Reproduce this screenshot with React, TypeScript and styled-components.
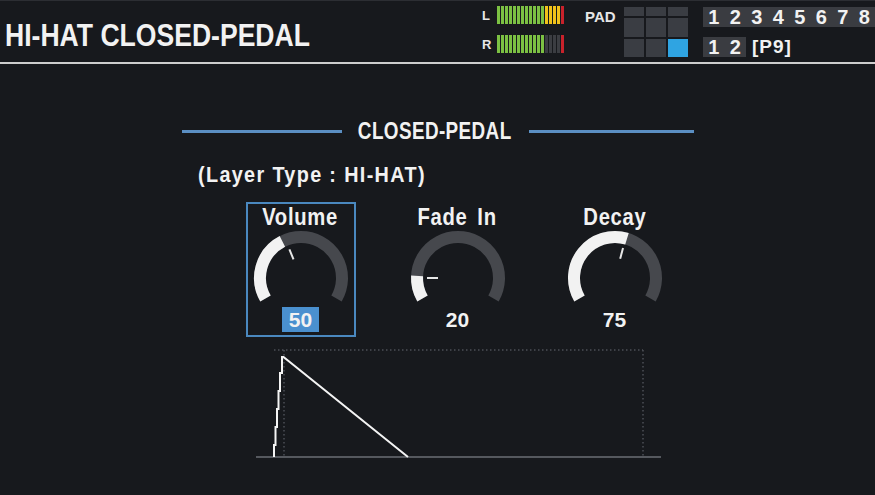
import styled, { createGlobalStyle } from "styled-components"

const GlobalStyle = createGlobalStyle`
  html, body {
    margin: 0;
    padding: 0;
    background: #17191d;
  }
`

const Screen = styled.div`
  width: 875px;
  height: 495px;
  overflow: hidden;
  background: #17191d;
  color: #f2f2f2;
  font-family: "Liberation Sans", Arial, sans-serif;
`

const Header = styled.header`
  box-sizing: border-box;
  height: 64px;
  display: flex;
  border-top: 1px solid #2c2e33;
  border-bottom: 2px solid #cdcdcd;
`
// the unit's display font is a condensed bold, so squeeze Liberation Sans
const Title = styled.h1`
  flex: 1;
  margin: 0;
  padding: 8px 0 0 5px;
  display: flex;
  align-items: center;
  font-size: 32px;
  font-weight: 700;
  white-space: nowrap;
  transform: scaleX(0.83);
  transform-origin: 5px center;
`
const Meters = styled.div`
  width: 86px;
  padding-top: 5px;
  display: flex;
  flex-direction: column;
  gap: 11px;
`
const MeterRow = styled.div`
  height: 18px;
  display: flex;
  align-items: center;
`
const MeterLabel = styled.span`
  width: 15px;
  font-size: 13px;
  font-weight: 700;
  color: #e6e6e6;
`
const Bars = styled.div`
  height: 18px;
  display: flex;
  gap: 1.5px;
`
const Bar = styled.span<{ $color: string }>`
  width: 2.5px;
  height: 100%;
  background: ${p => p.$color};
`
const PadLabel = styled.span`
  width: 39px;
  margin-left: 17px;
  padding-top: 7px;
  font-size: 15px;
  font-weight: 700;
  color: #e6e6e6;
`
const PadGrid = styled.div`
  margin-top: 6px;
  display: grid;
  grid-template-columns: repeat(3, 20px);
  grid-template-rows: 9px 19px 18px;
  gap: 2px;
  align-self: flex-start;
`
const PadCell = styled.span<{ $active?: boolean }>`
  background: ${p => (p.$active ? "#2fa4e2" : "#3a3d43")};
`
const Banks = styled.div`
  margin: 6px 0 0 15px;
  width: 172px;
  display: flex;
  flex-direction: column;
  gap: 9px;
`
const BankRow = styled.div`
  display: flex;
  align-items: center;
`
const BankBox = styled.div`
  display: flex;
  background: #3a3c41;
`
const BankNum = styled.span`
  width: 21.5px;
  height: 20px;
  line-height: 21px;
  text-align: center;
  font-size: 20px;
  font-weight: 700;
  color: #f2f2f2;
`
const PadName = styled.span`
  margin-left: 6px;
  font-size: 19px;
  font-weight: 700;
  letter-spacing: 1px;
`

const Main = styled.main`
  width: 512px;
  margin: 0 auto;
  padding-top: 54px;
  font-weight: 700;
`
const Heading = styled.div`
  height: 24px;
  display: grid;
  grid-template-columns: 160px minmax(0, 1fr) 165px;
  align-items: center;
`
const Rule = styled.span`
  height: 3px;
  background: #5b8fc3;
`
const HeadingText = styled.span`
  justify-self: center;
  font-size: 23px;
  letter-spacing: 0.5px;
  white-space: nowrap;
  transform: scaleX(0.82);
`
const LayerType = styled.div`
  margin: 21px 0 0 16px;
  font-size: 22px;
  letter-spacing: 1.5px;
  line-height: 24px;
  white-space: nowrap;
  transform: scaleX(0.9);
  transform-origin: left center;
`
const KnobRow = styled.div`
  margin: 15px 0 0 64px;
  display: flex;
  gap: 47px;
`
const KnobCell = styled.div<{ $selected?: boolean }>`
  box-sizing: border-box;
  width: 110px;
  height: 135px;
  display: flex;
  flex-direction: column;
  align-items: center;
  border: 2px solid ${p => (p.$selected ? "#4a88bf" : "transparent")};
`
const KnobLabel = styled.span`
  height: 26px;
  line-height: 26px;
  font-size: 23px;
  letter-spacing: 0.8px;
  word-spacing: 4px;
  white-space: pre;
  transform: scaleX(0.88);
`
const KnobValue = styled.span<{ $selected?: boolean }>`
  margin-top: 1px;
  height: 25px;
  line-height: 26px;
  padding: 0 7px;
  font-size: 21px;
  background: ${p => (p.$selected ? "#4a90cf" : "transparent")};
`
const Graph = styled.svg`
  display: block;
  margin: 12px 0 0 74px;
`

const polar = (r: number, deg: number) => {
  const a = (deg * Math.PI) / 180
  return [48 + r * Math.sin(a), 48 - r * Math.cos(a)]
}

const arc = (r: number, from: number, to: number) => {
  const [x1, y1] = polar(r, from)
  const [x2, y2] = polar(r, to)
  const large = to - from > 180 ? 1 : 0
  return `M${x1} ${y1} A${r} ${r} 0 ${large} 1 ${x2} ${y2}`
}

function Knob({ fill, tick }: { fill: number; tick: number }) {
  const [tx1, ty1] = polar(20, tick)
  const [tx2, ty2] = polar(31, tick)
  return (
    <svg width="96" height="76" viewBox="0 0 96 76">
      <path d={arc(41, -120, 120)} stroke="#46484d" strokeWidth="12" fill="none" />
      <path d={arc(41, -120, fill)} stroke="#f2f2f2" strokeWidth="12" fill="none" />
      <line x1={tx1} y1={ty1} x2={tx2} y2={ty2} stroke="#e6e6e6" strokeWidth="2" />
    </svg>
  )
}

const knobs = [
  { label: "Volume", value: "50", fill: -27, tick: -22, selected: true },
  { label: "Fade In", value: "20", fill: -87, tick: -90 },
  { label: "Decay", value: "75", fill: 17, tick: 15 },
]

const meterL = [...Array(12).fill("#7cc143"), ...Array(4).fill("#f0c21a"), "#c9222b"]
const meterR = [...Array(12).fill("#7cc143"), ...Array(4).fill("#3b3d42"), "#c9222b"]

function App() {
  return (
    <Screen>
      <GlobalStyle />
      <Header>
        <Title>HI-HAT CLOSED-PEDAL</Title>
        <Meters>
          <MeterRow>
            <MeterLabel>L</MeterLabel>
            <Bars>{meterL.map((c, i) => <Bar key={i} $color={c} />)}</Bars>
          </MeterRow>
          <MeterRow>
            <MeterLabel>R</MeterLabel>
            <Bars>{meterR.map((c, i) => <Bar key={i} $color={c} />)}</Bars>
          </MeterRow>
        </Meters>
        <PadLabel>PAD</PadLabel>
        <PadGrid>
          {Array.from({ length: 9 }).map((_, i) => (
            <PadCell key={i} $active={i === 8} />
          ))}
        </PadGrid>
        <Banks>
          <BankRow>
            <BankBox>
              {["1", "2", "3", "4", "5", "6", "7", "8"].map(n => (
                <BankNum key={n}>{n}</BankNum>
              ))}
            </BankBox>
          </BankRow>
          <BankRow>
            <BankBox>
              <BankNum>1</BankNum>
              <BankNum>2</BankNum>
            </BankBox>
            <PadName>[P9]</PadName>
          </BankRow>
        </Banks>
      </Header>

      <Main>
        <Heading>
          <Rule />
          <HeadingText>CLOSED-PEDAL</HeadingText>
          <Rule />
        </Heading>
        <LayerType>(Layer Type : HI-HAT)</LayerType>
        <KnobRow>
          {knobs.map(k => (
            <KnobCell key={k.label} $selected={k.selected}>
              <KnobLabel>{k.label}</KnobLabel>
              <Knob fill={k.fill} tick={k.tick} />
              <KnobValue $selected={k.selected}>{k.value}</KnobValue>
            </KnobCell>
          ))}
        </KnobRow>
        {/* envelope: attack staircase, then linear decay */}
        <Graph width="406" height="110" viewBox="0 0 406 110">
          <g stroke="#4c4f55" strokeWidth="1.5" strokeDasharray="1.5 2.5" fill="none">
            <line x1="18" y1="1" x2="387" y2="1" />
            <line x1="28" y1="1" x2="28" y2="107" />
            <line x1="387" y1="1" x2="387" y2="107" />
          </g>
          <line x1="0" y1="108" x2="405" y2="108" stroke="#55585e" strokeWidth="2" />
          <path
            d="M18 108 V96 H19.5 V78 H21 V60 H22.5 V42 H24 V24 H26 V8 H27.5 L152 108"
            stroke="#f4f4f4"
            strokeWidth="2"
            fill="none"
          />
        </Graph>
      </Main>
    </Screen>
  )
}

export default App
